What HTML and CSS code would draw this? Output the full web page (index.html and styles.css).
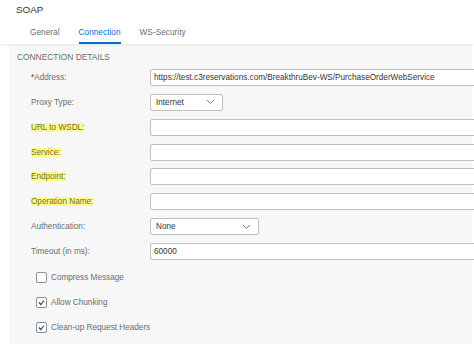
FILE: index.html
```html
<!DOCTYPE html>
<html lang="en">
<head>
    <meta charset="UTF-8">
    <title>SOAP</title>
    <link rel="stylesheet" href="styles.css">
</head>
<body>
    <div class="page-header">
        <div class="title">SOAP</div>
        <div class="tabs">
            <div class="tab">General</div>
            <div class="tab active">Connection</div>
            <div class="tab">WS-Security</div>
        </div>
    </div>

    <div class="panel">
        <div class="section-title">CONNECTION DETAILS</div>
        <div class="form">
            <div class="row">
                <div class="label"><span class="req">*</span>Address:</div>
                <div class="input wide">https://test.c3reservations.com/BreakthruBev-WS/PurchaseOrderWebService</div>
            </div>
            <div class="row">
                <div class="label">Proxy Type:</div>
                <div class="select small">
                    <span>Internet</span>
                    <svg width="9" height="6" viewBox="0 0 9 6"><polyline points="1,1 4.5,4.5 8,1" fill="none" stroke="#6a7c92" stroke-width="1"/></svg>
                </div>
            </div>
            <div class="row">
                <div class="label"><span class="mark">URL to WSDL:</span></div>
                <div class="input wide"></div>
            </div>
            <div class="row">
                <div class="label"><span class="mark">Service:</span></div>
                <div class="input wide"></div>
            </div>
            <div class="row">
                <div class="label"><span class="mark">Endpoint:</span></div>
                <div class="input wide"></div>
            </div>
            <div class="row">
                <div class="label"><span class="mark">Operation Name:</span></div>
                <div class="input wide"></div>
            </div>
            <div class="row">
                <div class="label">Authentication:</div>
                <div class="select medium">
                    <span>None</span>
                    <svg width="9" height="6" viewBox="0 0 9 6"><polyline points="1,1 4.5,4.5 8,1" fill="none" stroke="#6a7c92" stroke-width="1"/></svg>
                </div>
            </div>
            <div class="row">
                <div class="label">Timeout (in ms):</div>
                <div class="input wide">60000</div>
            </div>
        </div>

        <div class="checks">
            <div class="check-row">
                <span class="box"></span>
                <span>Compress Message</span>
            </div>
            <div class="check-row">
                <span class="box"><svg width="9" height="9" viewBox="0 0 9 9"><polyline points="2,4.5 3.8,6.5 7,2.5" fill="none" stroke="#32456b" stroke-width="1.2"/></svg></span>
                <span>Allow Chunking</span>
            </div>
            <div class="check-row">
                <span class="box"><svg width="9" height="9" viewBox="0 0 9 9"><polyline points="2,4.5 3.8,6.5 7,2.5" fill="none" stroke="#32456b" stroke-width="1.2"/></svg></span>
                <span>Clean-up Request Headers</span>
            </div>
        </div>
    </div>
</body>
</html>
```

FILE: styles.css
```css
* {
    margin: 0;
    padding: 0;
    box-sizing: border-box;
}

body {
    font-family: 'Liberation Sans', Arial, sans-serif;
    background: #fff;
    color: #32363a;
    width: 474px;
    height: 347px;
    overflow: hidden;
}

.page-header {
    height: 44px;
    padding-left: 16px;
    position: relative;
    z-index: 1;
    box-shadow: 0 1px 2px rgba(0, 0, 0, 0.08);
    background: #fff;
}

.title {
    font-size: 9.8px;
    padding-top: 4px;
    height: 23px;
    color: #32363a;
}

.tabs {
    display: flex;
    gap: 19px;
    padding-left: 14px;
}

.tab {
    font-size: 8.3px;
    color: #6a6d70;
    height: 21px;
    padding-top: 4px;
}

.tab.active {
    color: #0a6ed1;
    border-bottom: 2px solid #0a6ed1;
}

.panel {
    margin-left: 9px;
    width: 463px;
    height: 300px;
    background: #f7f7f7;
    position: relative;
}

.section-title {
    font-size: 8.4px;
    color: #6a6d70;
    padding: 8px 0 0 8px;
    height: 21px;
}

.form {
    padding-left: 22px;
}

.row {
    display: flex;
    align-items: center;
    height: 24.86px;
}

.label {
    width: 119px;
    flex-shrink: 0;
    font-size: 8.2px;
    color: #6a6d70;
}

.req {
    color: #bb0000;
}

.mark {
    background: #fdfd8c;
    color: #7a6a2a;
}

.input,
.select {
    flex-shrink: 0;
    height: 17px;
    background: #fff;
    border: 1px solid #bfbfbf;
    border-radius: 2px;
    font-size: 8.2px;
    color: #32363a;
    display: flex;
    align-items: center;
}

.input {
    padding-left: 3px;
}

.input.wide {
    width: 340px;
}

.select {
    justify-content: space-between;
    padding: 0 7px 0 5px;
}

.select.small {
    width: 73px;
}

.select.medium {
    width: 109px;
}

.checks {
    padding-left: 27px;
    padding-top: 1px;
}

.check-row {
    display: flex;
    align-items: center;
    gap: 4px;
    height: 25px;
    font-size: 8.2px;
    color: #6a6d70;
}

.box {
    width: 11px;
    height: 11px;
    border: 1px solid #89919a;
    border-radius: 2px;
    background: #fff;
    display: flex;
    align-items: center;
    justify-content: center;
}
```
